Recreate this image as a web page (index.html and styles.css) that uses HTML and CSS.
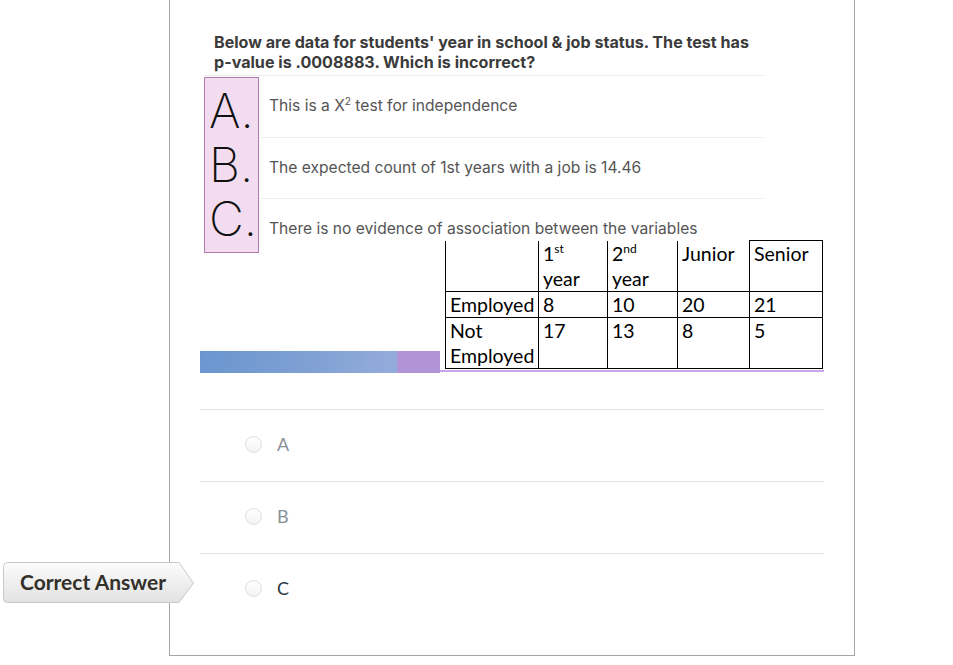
FILE: index.html
```html
<!DOCTYPE html>
<html>
<head>
<meta charset="utf-8">
<link rel="stylesheet" href="styles.css">
</head>
<body>
<div class="card">
  <div class="qimage">
    <div class="qhead">Below are data for students' year in school &amp; job status. The test has<br>p-value is .0008883. Which is incorrect?</div>
    <div class="opts">
      <div class="letters"><div>A.</div><div>B.</div><div>C.</div></div>
      <div class="choices">
        <div class="choice">This is a X<sup>2</sup> test for independence</div>
        <div class="choice">The expected count of 1st years with a job is 14.46</div>
        <div class="choice last">There is no evidence of association between the variables</div>
      </div>
    </div>
    <div class="bottomrow">
      <div class="bar"><div class="bar-blue"></div><div class="bar-purple"></div></div>
      <div class="tablewrap">
        <table class="data">
          <tr class="hdr">
            <td class="c1"></td>
            <td class="c2">1<sup>st</sup><br>year</td>
            <td class="c3">2<sup>nd</sup><br>year</td>
            <td class="c4">Junior</td>
            <td class="c5 topline">Senior</td>
          </tr>
          <tr>
            <td>Employed</td><td>8</td><td>10</td><td>20</td><td>21</td>
          </tr>
          <tr class="tall">
            <td>Not<br>Employed</td><td>17</td><td>13</td><td>8</td><td>5</td>
          </tr>
        </table>
      </div>
    </div>
  </div>
  <div class="answers">
    <div class="answer"><span class="radio"></span><span class="label">A</span></div>
    <div class="answer"><span class="radio"></span><span class="label">B</span></div>
    <div class="answer correct">
      <span class="radio"></span><span class="label dark">C</span>
      <div class="badge">
        <svg width="194" height="42" viewBox="0 0 194 42">
          <defs>
            <linearGradient id="bg" x1="0" y1="0" x2="0" y2="1">
              <stop offset="0" stop-color="#fcfcfc"/>
              <stop offset="1" stop-color="#e2e2e2"/>
            </linearGradient>
          </defs>
          <path d="M4.5,0.5 H176 L190.5,21 L176,40.5 H4.5 Q0.5,40.5 0.5,36.5 V4.5 Q0.5,0.5 4.5,0.5 Z" fill="url(#bg)" stroke="#c9c9c9"/>
        </svg>
        <span class="badge-text">Correct Answer</span>
      </div>
    </div>
  </div>
</div>
</body>
</html>
```

FILE: styles.css
```css
html, body {
  margin: 0;
  padding: 0;
  background: #fff;
}
.card {
  margin-left: 169px;
  width: 624px;
  padding: 0 30px 30px 30px;
  border: 1px solid #a6a6a6;
  border-top: none;
  background: #fff;
}
.qimage {
  width: 624px;
  height: 373px;
  display: flex;
  flex-direction: column;
}
.qhead {
  margin-left: 4px;
  width: 551px;
  padding: 32px 0 3px 10px;
  border-bottom: 1px solid #eeeeee;
  font-family: Inter, "Open Sans", sans-serif;
  font-weight: 700;
  font-size: 16.1px;
  line-height: 20px;
  color: #3b3b3b;
  white-space: nowrap;
}
.opts {
  display: flex;
  align-items: flex-start;
  margin-left: 4px;
  margin-top: 1px;
}
.letters {
  width: 53px;
  height: 174px;
  margin-bottom: -13px;
  background: #f3dcef;
  border: 1px solid #b27cb1;
  font-family: Inter, "Open Sans", sans-serif;
  font-weight: 200;
  font-size: 48px;
  line-height: 54px;
  color: #111;
  text-indent: 4px;
  position: relative;
  z-index: 1;
}
.letters div:first-child {
  margin-top: 6px;
}
.choices {
  display: flex;
  flex-direction: column;
  width: 505px;
  margin-top: -1px;
}
.choice {
  height: 62px;
  padding: 20px 0 0 10px;
  box-sizing: border-box;
  border-bottom: 1px solid #efefef;
  font-family: Inter, "Open Sans", sans-serif;
  font-size: 15.6px;
  line-height: 20px;
  color: #555;
  white-space: nowrap;
}
.choice + .choice {
  height: 61px;
}
.choice.last {
  height: 41px;
  border-bottom: none;
}
.choice sup {
  font-size: 10px;
  line-height: 0;
}
.bottomrow {
  display: flex;
  align-items: flex-end;
}
.bar {
  display: flex;
  width: 240px;
  height: 22px;
  margin-bottom: -1px;
}
.bar-blue {
  width: 197px;
  background: linear-gradient(100deg, #6a96cf 0%, #7fa0d3 55%, #94acdc 100%);
}
.bar-purple {
  width: 43px;
  background: #b094d6;
}
.tablewrap {
  width: 379px;
  padding-left: 5px;
  padding-bottom: 1px;
  border-bottom: 2px solid #c9a6e8;
}
.data {
  border-collapse: collapse;
  font-family: Lato, "Open Sans", sans-serif;
  font-size: 19.5px;
  line-height: 25px;
  color: #000;
}
.data td {
  border: 1px solid #000;
  padding: 0 0 0 4px;
  vertical-align: top;
  height: 24px;
}
.data tr.hdr td {
  border-top: none;
  height: 50px;
}
.data tr.hdr td.topline {
  border-top: 1px solid #000;
}
.data tr.tall td {
  height: 50px;
}
.data .c1 { width: 88px; }
.data .c2 { width: 64px; }
.data .c3 { width: 65px; }
.data .c4 { width: 67px; }
.data .c5 { width: 68px; }
.data sup {
  font-size: 12px;
  line-height: 0;
  vertical-align: 8px;
}
.answers {
  margin-top: 36px;
}
.answer {
  position: relative;
  display: flex;
  align-items: center;
  height: 72px;
  box-sizing: border-box;
  border-top: 1px solid #e2e2e2;
  padding-left: 45px;
  padding-bottom: 3px;
}
.radio {
  width: 15px;
  height: 15px;
  border: 1px solid #dedede;
  border-radius: 50%;
  background: linear-gradient(#ffffff, #f3f3f3);
}
.label {
  margin-left: 15px;
  font-family: Lato, "Open Sans", sans-serif;
  font-size: 18px;
  color: #8a9097;
}
.label.dark {
  color: #2d3b45;
}
.badge {
  position: absolute;
  left: -197px;
  top: 8px;
  width: 194px;
  height: 42px;
}
.badge svg {
  display: block;
}
.badge-text {
  position: absolute;
  left: 17px;
  top: 0;
  line-height: 40px;
  font-family: Lato, "Open Sans", sans-serif;
  font-weight: 700;
  font-size: 21px;
  color: #33302a;
  white-space: nowrap;
}
```
